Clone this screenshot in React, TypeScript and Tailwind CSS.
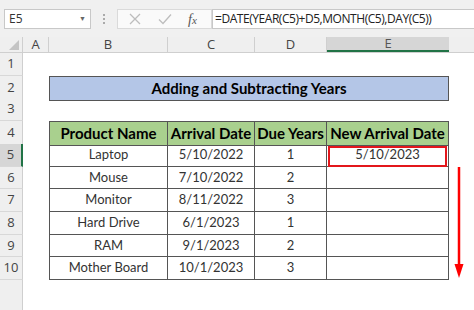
import React from 'react';

const cols = 'grid grid-cols-[23px_26px_119px_87px_72px_122px_1fr]';
const ui = "font-['Open_Sans','Noto_Sans',sans-serif]";
const cell = "font-['Lato','Noto_Sans',sans-serif]";

const rows = [
  { name: 'Laptop', date: '5/10/2022', due: '1', result: '5/10/2023' },
  { name: 'Mouse', date: '7/10/2022', due: '2', result: '' },
  { name: 'Monitor', date: '8/11/2022', due: '3', result: '' },
  { name: 'Hard Drive', date: '6/1/2023', due: '1', result: '' },
  { name: 'RAM', date: '9/1/2023', due: '2', result: '' },
  { name: 'Mother Board', date: '10/1/2023', due: '3', result: '' },
];

const RowHead: React.FC<{ n?: number; active?: boolean }> = ({ n, active }) => (
  <div
    className={`${ui} flex items-center justify-center text-[13px] text-[#444] border-b border-[#d8d8d8] ${
      active ? 'bg-[#d6d6d6] border-r-2 border-r-[#217346]' : 'bg-[#efefef] border-r border-r-[#cfcfcf]'
    }`}
  >
    {n}
  </div>
);

export default function App() {
  return (
    <div className="w-[474px] h-[310px] overflow-hidden bg-white relative flex flex-col">
      {/* formula bar */}
      <div className="h-[37px] bg-[#f0f0f0] pt-[9px] flex items-start">
        <div className={`${ui} ml-[4px] w-[87px] h-[20px] bg-white border border-[#c8c8c8] flex items-center justify-between px-[4px] text-[12px] text-[#333]`}>
          <span>E5</span>
          <span className="text-[7px] text-[#666]">▼</span>
        </div>
        <div className="w-[26px] h-[20px] flex flex-col items-center justify-center gap-[2px]">
          <span className="w-[2px] h-[2px] bg-[#aaa]" />
          <span className="w-[2px] h-[2px] bg-[#aaa]" />
          <span className="w-[2px] h-[2px] bg-[#aaa]" />
        </div>
        <div className="w-[95px] h-[20px] bg-[#fafafa] border border-[#dadada] flex items-center">
          <svg width="30" height="18" viewBox="0 0 30 18" className="ml-[2px]">
            <path d="M10 4l10 10M20 4L10 14" stroke="#bdbdbd" strokeWidth="1.3" fill="none" />
          </svg>
          <svg width="30" height="18" viewBox="0 0 30 18">
            <path d="M9 9.5l4 4 8-9" stroke="#bdbdbd" strokeWidth="1.3" fill="none" />
          </svg>
          <span className="ml-[8px] text-[14px] italic text-[#555] font-['Liberation_Serif',serif]">
            f<span className="text-[11px]">x</span>
          </span>
        </div>
        <div className={`${ui} flex-1 h-[20px] bg-white border border-[#c8c8c8] border-r-0 flex items-center pl-[2px] text-[12px] text-[#222] tracking-[-0.45px] whitespace-nowrap`}>
          =DATE(YEAR(C5)+D5,MONTH(C5),DAY(C5))
        </div>
      </div>

      {/* column headers */}
      <div className={`${cols} h-[16px] bg-[#efefef] border-b border-[#cfcfcf] ${ui} text-[13px] text-[#444]`}>
        <div className="border-r border-[#cfcfcf] flex items-end justify-end pr-[3px] pb-[2px]">
          <svg width="10" height="10" viewBox="0 0 10 10">
            <path d="M10 0V10H0Z" fill="#c4c4c4" />
          </svg>
        </div>
        {['A', 'B', 'C', 'D'].map(c => (
          <div key={c} className="border-r border-[#cfcfcf] flex items-center justify-center leading-none">
            {c}
          </div>
        ))}
        <div className="bg-[#d6d6d6] border-b-2 border-[#217346] flex items-center justify-center leading-none text-[#555]">E</div>
        <div />
      </div>

      {/* grid body */}
      <div className={`${cell} flex-1 flex flex-col`}>
        <div className={`${cols} h-[23px]`}>
          <RowHead n={1} />
          <div className="col-span-6" />
        </div>
        <div className={`${cols} h-[22px]`}>
          <RowHead n={2} />
          <div />
          <div className="col-span-4 bg-[#b4c6e7] border border-[#555] flex items-center justify-center font-bold text-[15px] text-black">
            Adding and Subtracting Years
          </div>
          <div />
        </div>
        <div className={`${cols} h-[23px]`}>
          <RowHead n={3} />
          <div className="col-span-6" />
        </div>
        <div className={`${cols} h-[23px]`}>
          <RowHead n={4} />
          <div />
          {['Product Name', 'Arrival Date', 'Due Years', 'New Arrival Date'].map((h, i) => (
            <div
              key={h}
              className={`bg-[#a9d08e] border-t border-b border-r border-[#555] ${i === 0 ? 'border-l' : ''} flex items-center justify-center font-bold text-[15px] text-black whitespace-nowrap`}
            >
              {h}
            </div>
          ))}
          <div />
        </div>
        {rows.map((r, i) => (
          <div key={r.name} className={`${cols} ${i % 3 === 1 ? 'h-[22px]' : 'h-[23px]'}`}>
            <RowHead n={i + 5} active={i === 0} />
            <div />
            <div className="border-l border-r border-b border-[#555] flex items-center justify-center text-[13px] text-[#333]">{r.name}</div>
            <div className="border-r border-b border-[#555] flex items-center justify-center text-[13px] text-[#333]">{r.date}</div>
            <div className="border-r border-b border-[#555] flex items-center justify-center text-[13px] text-[#333]">{r.due}</div>
            <div className="relative border-r border-b border-[#555] flex items-center justify-center text-[13px] text-[#333]">
              {r.result}
              {i === 0 && <div className="absolute inset-x-[1px] top-[2px] -bottom-[1px] border-[2px] border-[#e3161b]" />}
            </div>
            <div />
          </div>
        ))}
        <div className={`${cols} flex-1`}>
          <div className="bg-[#efefef] border-r border-[#cfcfcf]" />
        </div>
      </div>

      {/* red arrow */}
      <svg className="absolute left-[452px] top-[167px]" width="14" height="112" viewBox="0 0 14 112">
        <path d="M7 0V100" stroke="#ff0000" strokeWidth="2.5" />
        <path d="M2.5 97H11.5L7 111Z" fill="#ff0000" />
      </svg>
    </div>
  );
}
